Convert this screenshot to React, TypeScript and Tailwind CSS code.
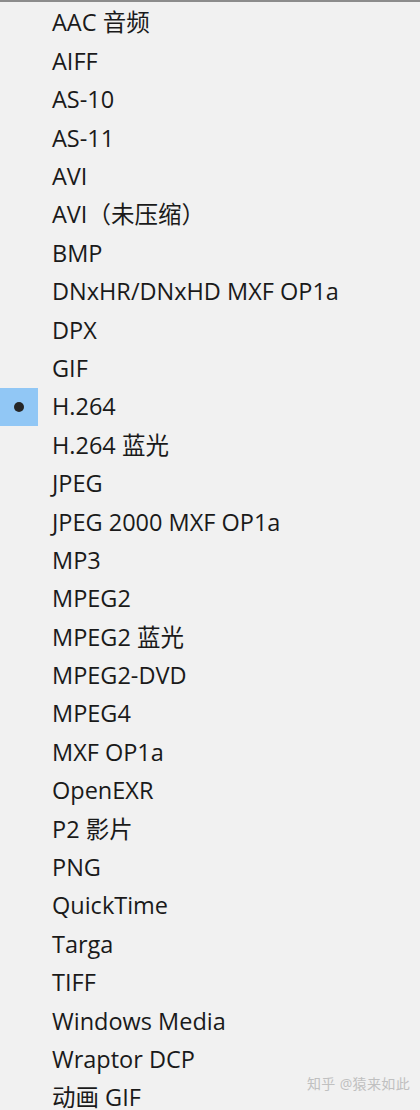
import React from 'react';

const formats = [
  'AAC 音频',
  'AIFF',
  'AS-10',
  'AS-11',
  'AVI',
  'AVI（未压缩）',
  'BMP',
  'DNxHR/DNxHD MXF OP1a',
  'DPX',
  'GIF',
  'H.264',
  'H.264 蓝光',
  'JPEG',
  'JPEG 2000 MXF OP1a',
  'MP3',
  'MPEG2',
  'MPEG2 蓝光',
  'MPEG2-DVD',
  'MPEG4',
  'MXF OP1a',
  'OpenEXR',
  'P2 影片',
  'PNG',
  'QuickTime',
  'Targa',
  'TIFF',
  'Windows Media',
  'Wraptor DCP',
  '动画 GIF',
];

const selected = 'H.264';

export default function App() {
  return (
    <div
      className="relative w-[420px] h-[1110px] overflow-hidden bg-[#f1f1f1] border-t-2 border-[#8c8c8c]"
      style={{ fontFamily: '"Open Sans", "Noto Sans CJK SC", sans-serif' }}
    >
      <ul className="pt-[2px]">
        {formats.map((name) => (
          <li key={name} className="flex items-center h-[38.4px]">
            <div className="w-[52px] h-full flex items-center">
              {name === selected && (
                <div className="w-[38px] h-full bg-[#91c7f5] flex items-center justify-center">
                  <div className="w-[10px] h-[10px] rounded-full bg-[#262626]" />
                </div>
              )}
            </div>
            <span className="text-[23.5px] leading-none text-[#1a1a1a] whitespace-nowrap">{name}</span>
          </li>
        ))}
      </ul>
      {/* 水印 */}
      <div className="absolute right-[10px] bottom-[16px] text-[14px] text-[#c0c0c0] tracking-wide">
        知乎 @猿来如此
      </div>
    </div>
  );
}
